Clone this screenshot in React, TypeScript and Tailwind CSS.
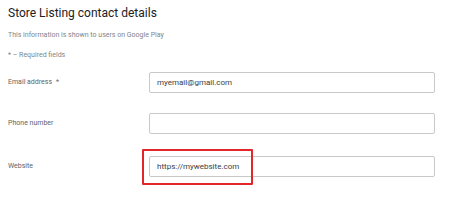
import React from "react";

function Row({ label, required, value, highlight, className }: { label: string; required?: boolean; value?: string; highlight?: boolean; className?: string }) {
  return (
    <div className={"flex items-center " + (className ?? "")}>
      <div className="w-[141px] text-[7px] text-[#5f6368]">
        {label}
        {required && <span className="ml-[4px]">*</span>}
      </div>
      <div className="relative">
        <div className="w-[286px] h-[21px] rounded-[2px] border border-[#c9c9c9] bg-white flex items-center pl-[7px] text-[8px] text-[#3c4043]">
          {value}
        </div>
        {highlight && (
          <div className="absolute left-[-7px] top-[-7px] w-[111px] h-[36px] border-2 border-[#e3262a] rounded-[1px] pointer-events-none" />
        )}
      </div>
    </div>
  );
}

export default function App() {
  return (
    <div className="w-[474px] h-[209px] bg-white overflow-hidden pl-[8px] pt-[5px]" style={{ fontFamily: "Roboto, 'Noto Sans', sans-serif" }}>
      <div className="text-[12px] leading-[16px] text-[#202124]">Store Listing contact details</div>
      <div className="mt-[9px] text-[7px] leading-[10px] text-[#80868b]">This information is shown to users on Google Play</div>
      <div className="mt-[10px] text-[7px] leading-[10px] text-[#80868b]">* – Required fields</div>
      <Row className="mt-[12px]" label="Email address" required value="myemail@gmail.com" />
      <Row className="mt-[20px]" label="Phone number" />
      <Row className="mt-[22px]" label="Website" value="https://mywebsite.com" highlight />
    </div>
  );
}
